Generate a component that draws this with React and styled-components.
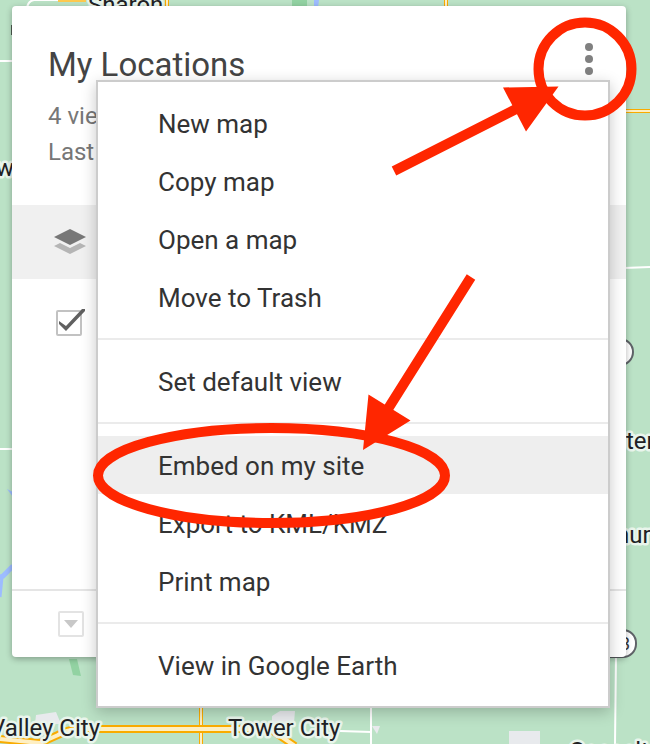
import React from "react";
import styled, { createGlobalStyle } from "styled-components";

const GlobalStyle = createGlobalStyle`
  *, *::before, *::after { box-sizing: border-box; }
  body {
    margin: 0;
    background: #bbe2c6;
    font-family: Roboto, "Liberation Sans", sans-serif;
  }
  button { font: inherit; color: inherit; border: 0; background: none; padding: 0; cursor: pointer; }
`;

const Page = styled.main`
  position: relative;
  min-height: 100vh;
  padding: 6px 24px 36px 12px;
  overflow: hidden;
`;

const Overlay = styled.svg`
  position: absolute;
  top: 0;
  left: 0;
  width: 650px;
  height: 744px;
  pointer-events: none;
`;

const MapLabel = styled.text`
  font-size: 24px;
  fill: #202124;
  stroke: #e9f5ec;
  stroke-width: 5px;
  stroke-linejoin: round;
  paint-order: stroke;
`;

const Card = styled.section`
  position: relative;
  display: flex;
  flex-direction: column;
  background: #fff;
  border-radius: 4px;
  box-shadow: 0 2px 6px rgba(0, 0, 0, 0.3);
`;

const Header = styled.header`
  display: flex;
  justify-content: space-between;
  align-items: flex-start;
  height: 199px;
  padding: 37px 24px 0 36px;
`;

const Title = styled.h1`
  margin: 0;
  font-size: 33px;
  font-weight: 400;
  line-height: 44px;
  color: #444;
`;

const Meta = styled.p`
  margin: 0;
  font-size: 24px;
  line-height: 36px;
  color: #777;
`;

const MetaGroup = styled.div`
  padding-top: 11px;
`;

const MoreButton = styled.button`
  display: grid;
  justify-items: center;
  gap: 4px;
  width: 26px;
`;

const Dot = styled.span`
  width: 8px;
  height: 8px;
  border-radius: 50%;
  background: #808080;
`;

const LayerBar = styled.div`
  display: flex;
  align-items: center;
  height: 74px;
  padding-left: 40px;
  background: #f0f0f0;
`;

const LayerBody = styled.div`
  height: 310px;
  padding: 29px 44px;
`;

const CheckLabel = styled.label`
  display: grid;
  width: 30px;
  height: 30px;
  & > * { grid-area: 1 / 1; }
`;

const Check = styled.input`
  appearance: none;
  width: 26px;
  height: 26px;
  margin: 0;
  align-self: center;
  border: 2px solid #c2c2c2;
  border-radius: 2px;
  background: #fff;
`;

const Footer = styled.footer`
  display: flex;
  align-items: center;
  height: 68px;
  padding-left: 46px;
  border-top: 2px solid #e5e5e5;
`;

const BaseMapButton = styled.button`
  display: grid;
  place-items: center;
  width: 26px;
  height: 26px;
  && { border: 2px solid #e3e3e3; }
  border-radius: 2px;
`;

const Menu = styled.div`
  position: absolute;
  top: 74px;
  left: 84px;
  right: 16px;
  background: #fff;
  border: 2px solid #ccc;
  box-shadow: 0 4px 14px rgba(0, 0, 0, 0.22);
`;

const MenuGroup = styled.div`
  display: flex;
  flex-direction: column;
  padding: 12px 0;
  & + & { border-top: 2px solid #ebebeb; }
`;

const MenuItem = styled.button`
  && {
    height: 58px;
    padding: 2px 60px 0;
    background: ${(p) => (p.$active ? "#eee" : "transparent")};
    font-size: 26px;
    line-height: 30px;
    color: #333;
  }
  text-align: left;
`;

const groups = [
  ["New map", "Copy map", "Open a map", "Move to Trash"],
  ["Set default view"],
  ["Embed on my site", "Export to KML/KMZ", "Print map"],
  ["View in Google Earth"],
];

function Road({ d }) {
  return (
    <g fill="none">
      <path d={d} stroke="#f9ab00" strokeWidth="4" />
      <path d={d} stroke="#feefc3" strokeWidth="2" />
    </g>
  );
}

function MapBackdrop() {
  return (
    <Overlay viewBox="0 0 650 744" aria-hidden="true">
      <path d="M292 0h15v8h-15zM69 659l8 0 4 17-8-1z" fill="#92d2a2" />
      <path d="M314 0h5l-1 8h-4zM7 489l6 3v5z" fill="#9dbcff" />
      <path d="M-2 578l5-2 10-10" fill="none" stroke="#9dbcff" strokeWidth="5" />
      <path d="M2 577l-2 20" fill="none" stroke="#9dbcff" strokeWidth="3" />
      <path d="M11 25h2v10h-2z" fill="#4c5a50" />
      <g fill="none" stroke="#fff" strokeWidth="2">
        <path d="M0 61h14M27 8q1-7 7-8h24M0 449h14M624 268l26-1M616 655l-1 89M371 706v38M340 731l31 1" />
      </g>
      <path d="M36 715l20-3 5 12H35zM272 716l8-5h15l-1 12h-22zM509 731h31v13h-31zM372 726h8l-3 8z" fill="#e8eaed" />
      <path d="M58 0h28" stroke="#fdc94f" strokeWidth="4" />
      <Road d="M167 -2v8M446 -2v10M624 111h28M201 706v40" />
      <path d="M0 739l40 4 18-8q8-5 20-6H270l25 17" fill="none" stroke="#f9ab00" strokeWidth="8" />
      <path d="M0 739l40 4 18-8q8-5 20-6H270l25 17" fill="none" stroke="#feefc3" strokeWidth="4" />
      <g fill="#fff" stroke="#5f6368" strokeWidth="2">
        <circle cx="620" cy="352" r="13" />
        <rect x="596" y="630" width="40" height="27" rx="13" />
      </g>
      <text x="620" y="650" fontSize="18" fill="#333">3</text>
      <MapLabel x="88" y="13">Sharon</MapLabel>
      <MapLabel x="-4" y="176">w</MapLabel>
      <MapLabel x="-10" y="736">Valley City</MapLabel>
      <MapLabel x="228" y="736">Tower City</MapLabel>
      <MapLabel x="626" y="449">ter</MapLabel>
      <MapLabel x="616" y="543">hur</MapLabel>
      <MapLabel x="569" y="759">Casselton</MapLabel>
    </Overlay>
  );
}

function Annotations() {
  return (
    <Overlay viewBox="0 0 650 744" aria-hidden="true">
      <g fill="none" stroke="#ff2600" strokeWidth="10">
        <circle cx="585" cy="69" r="46.5" />
        <ellipse cx="271.5" cy="475.5" rx="173.5" ry="47.5" />
        <path d="M394 171L520 107M471 277L386 412" />
      </g>
      <path d="M503 87.5l55.500-1L526 131.500zM368.500 394.500l42 26L363 450z" fill="#ff2600" />
    </Overlay>
  );
}

export default function App() {
  return (
    <Page>
      <GlobalStyle />
      <MapBackdrop />
      <Card>
        <Header>
          <div>
            <Title>My Locations</Title>
            <MetaGroup>
              <Meta>4 views</Meta>
              <Meta>Last</Meta>
            </MetaGroup>
          </div>
          <MoreButton aria-label="Map options" aria-haspopup="menu" aria-expanded="true">
            <Dot /><Dot /><Dot />
          </MoreButton>
        </Header>
        <LayerBar>
          <svg width="36" height="28" viewBox="0 0 36 28" aria-hidden="true">
            <path d="M2 18l6-3 10 5 10-5 6 3-16 8z" fill="#b5b5b5" />
            <path d="M2 9l16-8 16 8-16 8z" fill="#777" />
          </svg>
        </LayerBar>
        <LayerBody>
          <CheckLabel>
            <Check type="checkbox" defaultChecked aria-label="Show layer" />
            <svg width="30" height="30" viewBox="0 0 30 30" aria-hidden="true">
              <path d="M3 13l7 5L26 1l3 0v2L10 23 3 16z" fill="#606060" />
            </svg>
          </CheckLabel>
        </LayerBody>
        <Footer>
          <BaseMapButton aria-label="Base map">
            <svg width="14" height="8" viewBox="0 0 14 8" aria-hidden="true">
              <path d="M0 0h14L7 8z" fill="#c8c8c8" />
            </svg>
          </BaseMapButton>
        </Footer>
        <Menu role="menu">
          {groups.map((items) => (
            <MenuGroup key={items[0]} role="group">
              {items.map((item) => (
                <MenuItem key={item} role="menuitem" $active={item === "Embed on my site"}>
                  {item}
                </MenuItem>
              ))}
            </MenuGroup>
          ))}
        </Menu>
      </Card>
      <Annotations />
    </Page>
  );
}
